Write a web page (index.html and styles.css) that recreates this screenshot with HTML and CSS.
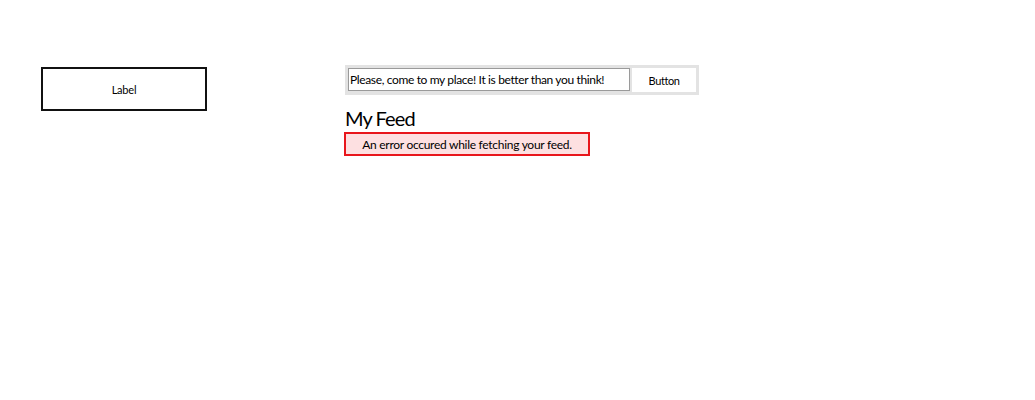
FILE: index.html
```html
<!DOCTYPE html>
<html>
<head>
<meta charset="utf-8">
<link rel="stylesheet" href="styles.css">
</head>
<body>
<div class="page">
  <div class="label-box">Label</div>
  <div class="main">
    <div class="toolbar">
      <div class="input">Please, come to my place! It is better than you think!</div>
      <div class="button">Button</div>
    </div>
    <h1 class="title">My Feed</h1>
    <div class="error">An error occured while fetching your feed.</div>
  </div>
</div>
</body>
</html>
```
FILE: styles.css
```css
html, body {
  margin: 0;
  padding: 0;
  background: #ffffff;
}
body {
  font-family: "Lato", "Liberation Sans", sans-serif;
  color: #000;
}
.page {
  display: flex;
  align-items: flex-start;
  padding: 65px 0 0 41px;
}
.label-box {
  margin-top: 2px;
  width: 162px;
  height: 40px;
  border: 2px solid #111;
  display: flex;
  align-items: center;
  justify-content: center;
  font-size: 11px;
  letter-spacing: -0.2px;
}
.main {
  margin-left: 138px;
  display: flex;
  flex-direction: column;
  align-items: flex-start;
}
.toolbar {
  display: flex;
  gap: 2px;
  padding: 3px;
  background: #e3e3e3;
  width: 348px;
  height: 24px;
}
.input {
  width: 280px;
  height: 21px;
  border: 1px solid #9a9a9a;
  background: #fff;
  font-size: 12px;
  letter-spacing: -0.36px;
  line-height: 21px;
  padding-left: 1px;
  white-space: nowrap;
  overflow: hidden;
}
.button {
  width: 64px;
  height: 24px;
  background: #fff;
  font-size: 11px;
  letter-spacing: -0.4px;
  display: flex;
  align-items: center;
  justify-content: center;
}
.title {
  margin: 11px 0 0 0;
  font-size: 20px;
  font-weight: normal;
  line-height: 24px;
  letter-spacing: -0.9px;
}
.error {
  margin-top: 2px;
  margin-left: -1px;
  width: 242px;
  height: 20px;
  border: 2px solid #e8161c;
  background: #fde0e1;
  font-size: 12px;
  letter-spacing: -0.28px;
  display: flex;
  align-items: center;
  justify-content: center;
}
```
